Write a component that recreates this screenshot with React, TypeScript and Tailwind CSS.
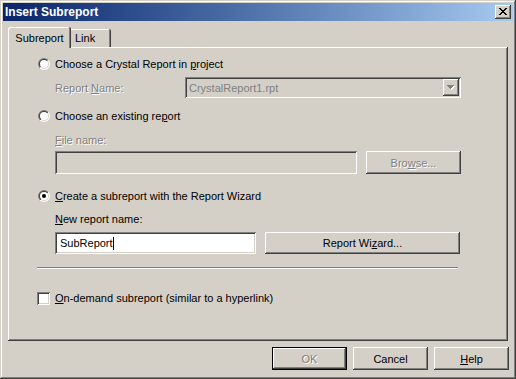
import { useId } from "react";

// classic 3D edges
const raised =
  "shadow-[inset_-1px_-1px_#404040,inset_1px_1px_#ffffff,inset_-2px_-2px_#808080,inset_2px_2px_#d4d0c8]";
const sunken =
  "shadow-[inset_1px_1px_#808080,inset_-1px_-1px_#ffffff,inset_2px_2px_#404040,inset_-2px_-2px_#d4d0c8]";
const disabledText = "text-[#808080] [text-shadow:1px_1px_0_#ffffff]";

function Radio({ checked }: { checked?: boolean }) {
  const id = useId().replace(/:/g, "");
  return (
    <svg width="12" height="12" viewBox="0 0 12 12" className="shrink-0">
      <defs>
        <linearGradient id={`o${id}`} x1="0" y1="0" x2="1" y2="1">
          <stop offset="0.5" stopColor="#808080" />
          <stop offset="0.5" stopColor="#ffffff" />
        </linearGradient>
        <linearGradient id={`i${id}`} x1="0" y1="0" x2="1" y2="1">
          <stop offset="0.5" stopColor="#404040" />
          <stop offset="0.5" stopColor="#d4d0c8" />
        </linearGradient>
      </defs>
      <circle cx="6" cy="6" r="6" fill={`url(#o${id})`} />
      <circle cx="6" cy="6" r="5" fill={`url(#i${id})`} />
      <circle cx="6" cy="6" r="4" fill="#ffffff" />
      {checked && <circle cx="6" cy="6" r="2" fill="#000000" />}
    </svg>
  );
}

function Button({
  children,
  className = "",
  disabled,
}: {
  children: React.ReactNode;
  className?: string;
  disabled?: boolean;
}) {
  return (
    <div
      className={`flex items-center justify-center bg-[#d4d0c8] ${raised} ${
        disabled ? disabledText : "text-black"
      } ${className}`}
    >
      {children}
    </div>
  );
}

export default function App() {
  return (
    <div className="font-['Tahoma','Liberation_Sans',Arial,sans-serif] text-[11px] leading-[14px] text-black">
      <div className="w-[516px] h-[379px] bg-[#d4d0c8] p-[3px] flex flex-col shadow-[inset_-1px_-1px_#404040,inset_1px_1px_#d4d0c8,inset_-2px_-2px_#808080,inset_2px_2px_#ffffff]">
        {/* title bar */}
        <div className="h-[18px] flex items-center justify-between bg-linear-to-r from-[#0a246a] to-[#a6caf0] pl-[2px] pr-[2px]">
          <span className="text-white font-bold text-[12px]">Insert Subreport</span>
          <div className={`w-[16px] h-[14px] flex items-center justify-center bg-[#d4d0c8] ${raised}`}>
            <svg width="8" height="7" viewBox="0 0 8 7" className="-mt-px">
              <path
                d="M0 0h2v1H0z M6 0h2v1H6z M1 1h2v1H1z M5 1h2v1H5z M2 2h4v1H2z M3 3h2v1H3z M2 4h4v1H2z M1 5h2v1H1z M5 5h2v1H5z M0 6h2v1H0z M6 6h2v1H6z"
                fill="#000"
              />
            </svg>
          </div>
        </div>

        {/* tabs */}
        <div className="ml-[5px] mt-[6px] h-[20px] flex items-end">
          <div className="relative z-10 -mb-px w-[63px] h-[21px] flex items-center justify-center bg-[#d4d0c8] rounded-t-[2px] shadow-[inset_-1px_0_#404040,inset_1px_1px_#ffffff,inset_-2px_0_#808080]">
            Subreport
          </div>
          <div className="w-[40px] h-[18px] flex items-center pl-[4px] bg-[#d4d0c8] rounded-tr-[2px] shadow-[inset_-1px_0_#404040,inset_0_1px_#ffffff,inset_-2px_0_#808080]">
            Link
          </div>
        </div>

        {/* tab page */}
        <div className="ml-[5px] w-[500px] h-[294px] pl-[30px] pt-[10px] flex flex-col shadow-[inset_-1px_-1px_#404040,inset_1px_1px_#ffffff,inset_-2px_-2px_#808080]">
          <div className="h-[14px] flex items-center gap-[5px]">
            <Radio />
            <span>
              Choose a Crystal Report in <u className="underline-offset-1">p</u>roject
            </span>
          </div>

          <div className="mt-[6px] h-[21px] flex items-center">
            <span className={`ml-[17px] w-[130px] ${disabledText}`}>
              Report <u>N</u>ame:
            </span>
            <div className={`w-[276px] h-[21px] p-[2px] flex items-center bg-[#d4d0c8] ${sunken}`}>
              <span className="flex-1 pl-[2px] text-[#808080]">CrystalReport1.rpt</span>
              <div className={`w-[16px] h-[17px] flex items-center justify-center bg-[#d4d0c8] ${raised}`}>
                <svg width="8" height="5" viewBox="0 0 8 5">
                  <path d="M1 1h7v1H1z M2 2h5v1H2z M3 3h3v1H3z M4 4h1v1H4z" fill="#ffffff" />
                  <path d="M0 0h7v1H0z M1 1h5v1H1z M2 2h3v1H2z M3 3h1v1H3z" fill="#808080" />
                </svg>
              </div>
            </div>
          </div>

          <div className="mt-[11px] h-[14px] flex items-center gap-[5px]">
            <Radio />
            <span>
              Choose an existing re<u>p</u>ort
            </span>
          </div>

          <div className={`mt-[10px] h-[14px] ml-[17px] ${disabledText}`}>
            <u>F</u>ile name:
          </div>

          <div className="mt-[4px] h-[23px] flex ml-[17px] gap-[9px]">
            <div className={`w-[302px] h-[23px] bg-[#d4d0c8] ${sunken}`} />
            <Button disabled className="w-[95px] h-[23px]">
              Bro<u>w</u>se...
            </Button>
          </div>

          <div className="mt-[15px] h-[14px] flex items-center gap-[5px]">
            <Radio checked />
            <span>
              <u>C</u>reate a subreport with the Report Wizard
            </span>
          </div>

          <div className="mt-[9px] h-[14px] ml-[17px]">
            <u>N</u>ew report name:
          </div>

          <div className="mt-[6px] h-[22px] flex ml-[17px] gap-[9px]">
            <div className={`w-[201px] h-[22px] bg-white pl-[5px] flex items-center ${sunken}`}>
              <span>SubReport</span>
              <span className="w-px h-[13px] bg-black" />
            </div>
            <Button className="w-[195px] h-[22px]">
              Report Wi<u>z</u>ard...
            </Button>
          </div>

          <div className="mt-[13px] -ml-px w-[421px] h-0 border-t border-t-[#808080] border-b border-b-white" />

          <div className="mt-[22px] -ml-px h-[14px] flex items-center gap-[5px]">
            <div className={`w-[13px] h-[13px] bg-white ${sunken}`} />
            <span>
              <u>O</u>n-demand subreport (similar to a hyperlink)
            </span>
          </div>
        </div>

        {/* dialog buttons */}
        <div className="mt-[6px] h-[23px] flex justify-end gap-[6px] pr-[4px]">
          <div className="w-[75px] h-[23px] border border-black">
            <Button disabled className="w-full h-full">
              OK
            </Button>
          </div>
          <Button className="w-[75px] h-[23px]">Cancel</Button>
          <Button className="w-[75px] h-[23px]">
            <u>H</u>elp
          </Button>
        </div>
      </div>
    </div>
  );
}
